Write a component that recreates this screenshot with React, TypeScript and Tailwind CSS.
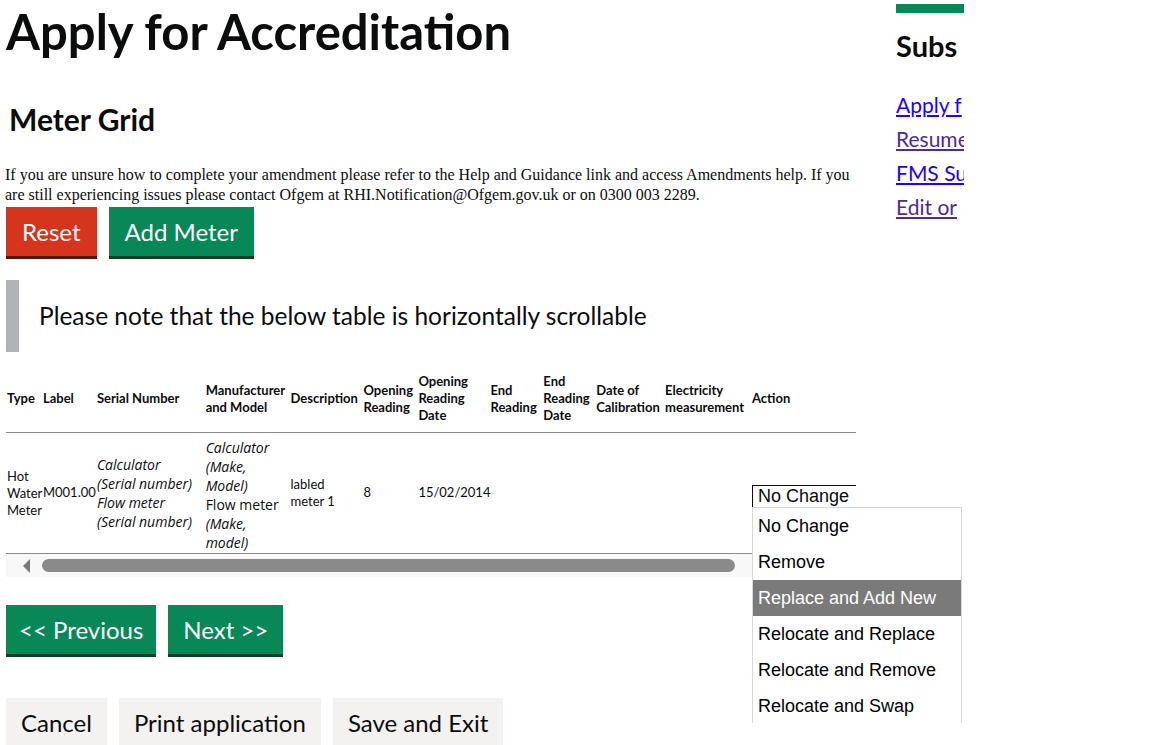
export default function App() {
  const font = { fontFamily: 'Lato, "Open Sans", sans-serif' };
  const serif = { fontFamily: '"Liberation Serif", serif' };
  const arial = { fontFamily: '"Liberation Sans", Arial, sans-serif' };
  const th = 'text-left align-middle font-bold text-[13px] leading-[17px] pr-1 pb-2';
  const it = 'italic text-[14px] leading-[19px]';
  const italicFont = { fontFamily: '"Open Sans", sans-serif' };
  return (
    <div className="relative w-[1152px] h-[745px] overflow-hidden bg-white text-[#0b0c0c] flex" style={font}>
      <div className="w-[856px] ml-[6px] shrink-0">
        <h1 className="text-[49px] font-bold leading-[56px] mt-[3px]">Apply for Accreditation</h1>
        <h2 className="text-[30px] font-bold ml-[3px] mt-[43px] leading-[34px]">Meter Grid</h2>
        <p className="text-[16px] leading-[20px] mt-[29px] -ml-[1px] w-[850px]" style={serif}>
          If you are unsure how to complete your amendment please refer to the Help and Guidance link and access Amendments help. If you are still experiencing issues please contact Ofgem at RHI.Notification@Ofgem.gov.uk or on 0300 003 2289.
        </p>
        <div className="flex gap-3 mt-[2px]">
          <button className="h-[52px] px-4 bg-[#d4351c] text-white text-[24px] border-b-[3px] border-[#55150b]">Reset</button>
          <button className="h-[52px] px-4 bg-[#078856] text-white text-[24px] border-b-[3px] border-[#0f3d29]">Add Meter</button>
        </div>
        <div className="mt-[21px] h-[72px] border-l-[13px] border-[#b1b4b6] flex items-center pl-[20px] text-[24.5px]">
          Please note that the below table is horizontally scrollable
        </div>
        <table className="mt-[21px] w-[850px] border-collapse text-[13px]">
          <thead>
            <tr className="border-b border-[#8a8a8a] h-[56px]">
              <th className={th + ' w-[37px] pl-[1px]'}>Type</th>
              <th className={th + ' w-[54px]'}>Label</th>
              <th className={th + ' w-[111px]'}>Serial Number</th>
              <th className={th + ' w-[85px]'}>Manufacturer and Model</th>
              <th className={th + ' w-[73px]'}>Description</th>
              <th className={th + ' w-[55px]'}>Opening Reading</th>
              <th className={th + ' w-[68px]'}>Opening Reading Date</th>
              <th className={th + ' w-[53px]'}>End Reading</th>
              <th className={th + ' w-[53px]'}>End Reading Date</th>
              <th className={th + ' w-[69px]'}>Date of Calibration</th>
              <th className={th + ' w-[87px]'}>Electricity measurement</th>
              <th className={th}>Action</th>
            </tr>
          </thead>
          <tbody>
            <tr className="border-b border-[#8a8a8a] h-[121px] align-middle">
              <td className="leading-[17px] pl-[1px]">Hot Water Meter</td>
              <td>M001.00</td>
              <td className={it} style={italicFont}>Calculator<br />(Serial number)<br />Flow meter<br />(Serial number)</td>
              <td className="text-[14px] leading-[19px] pt-[4px]" style={italicFont}><span className="italic">Calculator (Make, Model)</span><br />Flow meter<br /><span className="italic">(Make, model)</span></td>
              <td className="leading-[17px]">labled<br />meter 1</td>
              <td>8</td>
              <td>15/02/2014</td>
              <td></td><td></td><td></td><td></td>
              <td>
                <div className="w-[104px] h-[23px] border border-[#0b0c0c] border-r-0 text-[18px] leading-[21px] pl-[5px] mt-[6px] overflow-hidden whitespace-nowrap" style={arial}>No Change</div>
              </td>
            </tr>
          </tbody>
        </table>
        <div className="w-[850px] h-[23px] bg-[#f8f8f8] flex items-center">
          <svg width="10" height="14" className="ml-[16px]" viewBox="0 0 10 14"><path d="M8 0 L1 7 L8 14 Z" fill="#7a7a7a" /></svg>
          <div className="ml-[10px] w-[693px] h-[13px] rounded-full bg-[#8a8a8a]" />
        </div>
        <div className="flex gap-3 mt-[28px]">
          <button className="h-[52px] px-[13px] bg-[#078856] text-white text-[24px] border-b-[3px] border-[#0f3d29]">&lt;&lt; Previous</button>
          <button className="h-[52px] px-[15px] bg-[#078856] text-white text-[24px] border-b-[3px] border-[#0f3d29]">Next &gt;&gt;</button>
        </div>
        <div className="flex gap-3 mt-[41px]">
          <button className="h-[52px] px-[15px] bg-[#f3f2f1] text-[24px] border-b-[3px] border-[#929191]">Cancel</button>
          <button className="h-[52px] px-[15px] bg-[#f3f2f1] text-[24px] border-b-[3px] border-[#929191]">Print application</button>
          <button className="h-[52px] px-[15px] bg-[#f3f2f1] text-[24px] border-b-[3px] border-[#929191]">Save and Exit</button>
        </div>
      </div>
      <div className="ml-[34px] w-[68px] overflow-hidden shrink-0 whitespace-nowrap">
        <div className="h-[9px] bg-[#078856] mt-[4px]" />
        <h3 className="text-[29px] font-bold mt-[16px] leading-[34px]">Subs</h3>
        <div className="mt-[30px] flex flex-col gap-[11px] text-[21px] leading-[23px]">
          <a className="underline text-[#1d00ff]">Apply f</a>
          <a className="underline text-[#4c2c92]">Resume</a>
          <a className="underline text-[#1d00ff]">FMS Su</a>
          <a className="underline text-[#4c2c92]">Edit or</a>
        </div>
      </div>
      <div className="absolute left-[752px] top-[507px] w-[210px] h-[216px] bg-white border border-[#d8d8d8] border-b-0 text-[18px] text-black" style={arial}>
        <div className="h-[36px] flex items-center pl-[5px]">No Change</div>
        <div className="h-[36px] flex items-center pl-[5px]">Remove</div>
        <div className="h-[36px] flex items-center pl-[5px] bg-[#7a7a7a] text-white">Replace and Add New</div>
        <div className="h-[36px] flex items-center pl-[5px]">Relocate and Replace</div>
        <div className="h-[36px] flex items-center pl-[5px]">Relocate and Remove</div>
        <div className="h-[36px] flex items-center pl-[5px]">Relocate and Swap</div>
      </div>
    </div>
  );
}
